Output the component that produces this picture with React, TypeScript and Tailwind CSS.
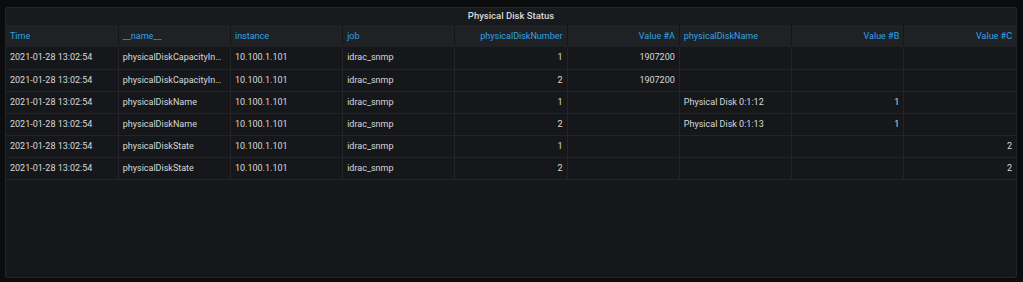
import React from "react";

type Align = "left" | "right";

const COLUMNS: { key: string; label: string; align: Align }[] = [
  { key: "time", label: "Time", align: "left" },
  { key: "name", label: "__name__", align: "left" },
  { key: "instance", label: "instance", align: "left" },
  { key: "job", label: "job", align: "left" },
  { key: "num", label: "physicalDiskNumber", align: "right" },
  { key: "a", label: "Value #A", align: "right" },
  { key: "diskName", label: "physicalDiskName", align: "left" },
  { key: "b", label: "Value #B", align: "right" },
  { key: "c", label: "Value #C", align: "right" },
];

const TS = "2021-01-28 13:02:54";
const IP = "10.100.1.101";

const ROWS: Record<string, string>[] = [
  { time: TS, name: "physicalDiskCapacityInBytes", instance: IP, job: "idrac_snmp", num: "1", a: "1907200", diskName: "", b: "", c: "" },
  { time: TS, name: "physicalDiskCapacityInBytes", instance: IP, job: "idrac_snmp", num: "2", a: "1907200", diskName: "", b: "", c: "" },
  { time: TS, name: "physicalDiskName", instance: IP, job: "idrac_snmp", num: "1", a: "", diskName: "Physical Disk 0:1:12", b: "1", c: "" },
  { time: TS, name: "physicalDiskName", instance: IP, job: "idrac_snmp", num: "2", a: "", diskName: "Physical Disk 0:1:13", b: "1", c: "" },
  { time: TS, name: "physicalDiskState", instance: IP, job: "idrac_snmp", num: "1", a: "", diskName: "", b: "", c: "2" },
  { time: TS, name: "physicalDiskState", instance: IP, job: "idrac_snmp", num: "2", a: "", diskName: "", b: "", c: "2" },
];

export default function App() {
  return (
    <div
      className="h-[282px] w-[1023px] overflow-hidden bg-[#0b0c0e] pt-[7px] pl-[5px] pr-[6px] pb-[4px]"
      style={{ fontFamily: "Roboto, 'Liberation Sans', sans-serif" }}
    >
      <div className="flex h-full flex-col overflow-hidden rounded-[2px] border border-[#222428] bg-[#16171b]">
        {/* panel title */}
        <div className="flex h-[17px] shrink-0 items-center justify-center bg-[#181a1e] text-[9.5px] font-medium text-[#d8d9da]">
          Physical Disk Status
        </div>

        <table className="w-full table-fixed border-collapse text-[9px] leading-none">
          <thead>
            <tr className="h-[22px] bg-[#1f2125]">
              {COLUMNS.map((c, i) => (
                <th
                  key={c.key}
                  className={`overflow-hidden whitespace-nowrap px-[4px] font-normal text-[#33a2e5] ${
                    c.align === "right" ? "text-right" : "text-left"
                  } ${i > 0 ? "border-l border-[#15161a]" : ""}`}
                >
                  {c.label}
                </th>
              ))}
            </tr>
          </thead>
          <tbody>
            {ROWS.map((r, ri) => (
              <tr key={ri} className="h-[22px] border-b border-[#222428]">
                {COLUMNS.map((c, i) => (
                  <td
                    key={c.key}
                    className={`overflow-hidden text-ellipsis whitespace-nowrap px-[4px] text-[#d8d9da] ${
                      c.align === "right" ? "text-right" : "text-left"
                    } ${i > 0 ? "border-l border-[#222428]" : ""}`}
                  >
                    {r[c.key]}
                  </td>
                ))}
              </tr>
            ))}
          </tbody>
        </table>
      </div>
    </div>
  );
}
